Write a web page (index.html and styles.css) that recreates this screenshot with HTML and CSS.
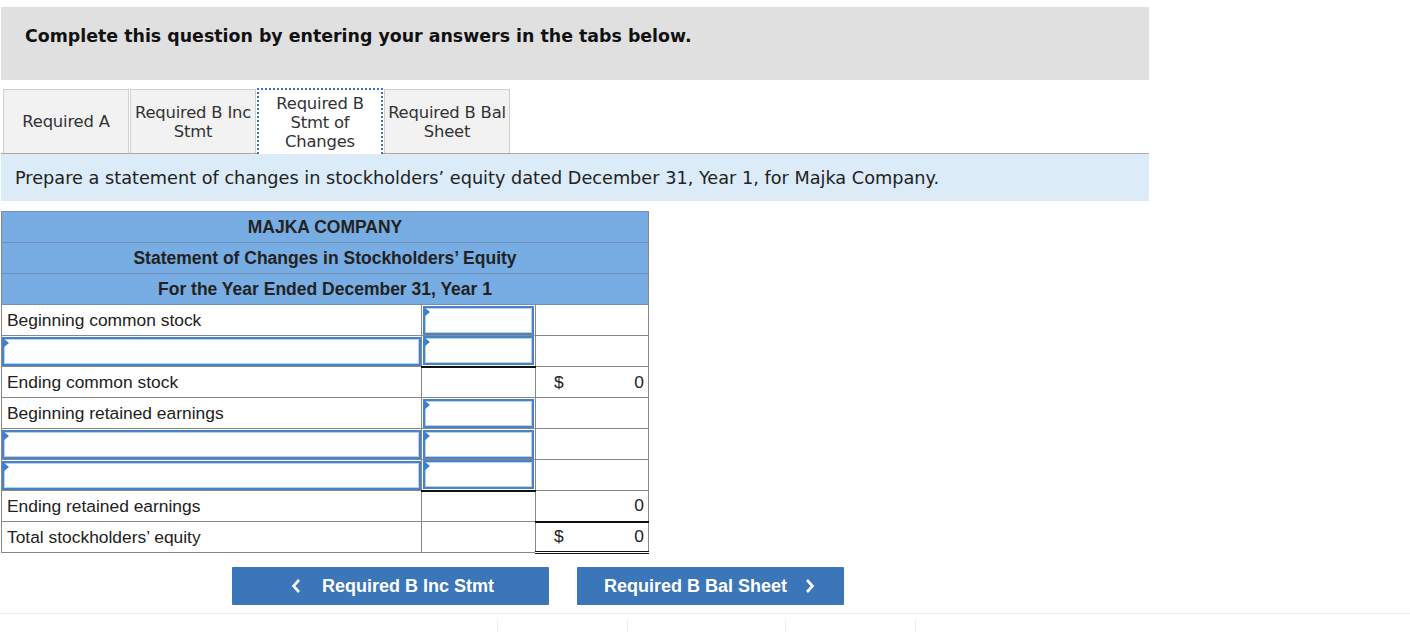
FILE: index.html
```html
<!DOCTYPE html>
<html>
<head>
<meta charset="utf-8">
<link rel="stylesheet" href="styles.css">
</head>
<body>
<div class="page">
  <div class="prompt">Complete this question by entering your answers in the tabs below.</div>
  <div class="tabs">
    <div class="tab">Required A</div>
    <div class="tab">Required B Inc<br>Stmt</div>
    <div class="tab active">Required B<br>Stmt of<br>Changes</div>
    <div class="tab">Required B Bal<br>Sheet</div>
  </div>
  <div class="instr">Prepare a statement of changes in stockholders’ equity dated December 31, Year 1, for Majka Company.</div>
  <table class="stmt">
    <colgroup><col class="w1"><col class="w2"><col class="w3"></colgroup>
    <tr class="hd"><td colspan="3">MAJKA COMPANY</td></tr>
    <tr class="hd"><td colspan="3">Statement of Changes in Stockholders’ Equity</td></tr>
    <tr class="hd"><td colspan="3">For the Year Ended December 31, Year 1</td></tr>
    <tr>
      <td class="c1">Beginning common stock</td>
      <td class="c2 in"><div class="box"><span class="tri"></span></div></td>
      <td class="c3"></td>
    </tr>
    <tr>
      <td class="c1 in"><div class="box"><span class="tri"></span></div></td>
      <td class="c2 in"><div class="box"><span class="tri"></span></div></td>
      <td class="c3"></td>
    </tr>
    <tr>
      <td class="c1">Ending common stock</td>
      <td class="c2 sumtop"></td>
      <td class="c3"><div class="amt"><span>$</span><span>0</span></div></td>
    </tr>
    <tr>
      <td class="c1">Beginning retained earnings</td>
      <td class="c2 in"><div class="box"><span class="tri"></span></div></td>
      <td class="c3"></td>
    </tr>
    <tr>
      <td class="c1 in"><div class="box"><span class="tri"></span></div></td>
      <td class="c2 in"><div class="box"><span class="tri"></span></div></td>
      <td class="c3"></td>
    </tr>
    <tr>
      <td class="c1 in"><div class="box"><span class="tri"></span></div></td>
      <td class="c2 in"><div class="box"><span class="tri"></span></div></td>
      <td class="c3"></td>
    </tr>
    <tr>
      <td class="c1">Ending retained earnings</td>
      <td class="c2 sumtop"></td>
      <td class="c3"><div class="amt"><span></span><span>0</span></div></td>
    </tr>
    <tr>
      <td class="c1">Total stockholders’ equity</td>
      <td class="c2"></td>
      <td class="c3 total"><div class="amt"><span>$</span><span>0</span></div></td>
    </tr>
  </table>
  <div class="nav">
    <div class="btn prev"><svg class="chev" width="10" height="16" viewBox="0 0 10 16"><path d="M8 2 L2.5 8 L8 14" fill="none" stroke="#fff" stroke-width="2.6"/></svg>Required B Inc Stmt</div>
    <div class="btn next">Required B Bal Sheet<svg class="chev" width="10" height="16" viewBox="0 0 10 16"><path d="M2 2 L7.5 8 L2 14" fill="none" stroke="#fff" stroke-width="2.6"/></svg></div>
  </div>
</div>
<div class="footer">
  <div class="fcols"><span></span><span></span><span></span><span></span></div>
</div>
</body>
</html>
```
FILE: styles.css
```css
html, body { margin: 0; padding: 0; background: #fff; }
body { font-family: "DejaVu Sans", Verdana, sans-serif; color: #222; }
.page { width: 1148px; padding: 7px 0 0 1px; }
.prompt {
  height: 73px; background: #e0e0e0; box-sizing: border-box;
  padding: 19px 0 0 24px; font-weight: bold; font-size: 17.4px; color: #111;
}
.tabs { display: flex; margin: 9px 0 0 2px; gap: 1px; height: 64px; position: relative; z-index: 1; }
.tab {
  width: 126px; height: 64px; box-sizing: border-box; background: #f2f2f2;
  border: 1px solid #cfcfcf; border-bottom: none;
  display: flex; align-items: center; justify-content: center; text-align: center;
  font-size: 16.4px; line-height: 19px; color: #333; white-space: nowrap; letter-spacing: -0.2px;
}
.tab.active {
  background: #fff; border: 2px dotted #3a75c4; border-bottom: none; height: 66px;
  margin-top: -1px; padding-top: 1px;
}
.instr {
  height: 48px; box-sizing: border-box; background: #dcebf8; border-top: 1px solid #a9a9a9;
  padding: 14px 0 0 14px; font-size: 17.7px; color: #222;
}
.stmt {
  margin-top: 10px; border-collapse: collapse; width: 647px; table-layout: fixed;
  font-family: "Liberation Sans", Arial, sans-serif; font-size: 17.4px;
}
col.w1 { width: 420px; }
col.w2 { width: 114px; }
col.w3 { width: 113px; }
.stmt td { border: 1px solid #888; height: 31px; padding: 0; box-sizing: border-box; white-space: nowrap; }
.stmt tr.hd td {
  background: #78ade3; text-align: center; font-weight: bold; font-size: 17.5px; color: #222;
  border-color: #6f8fb8 #888;
}
.c1 { padding-left: 5px !important; color: #222; }
.stmt td.in { padding: 0 !important; }
.box {
  position: relative; height: 29px; box-sizing: border-box;
  border: 2px solid #4a82c6; box-shadow: inset 0 0 0 1px #b7d2ee; background: #fff;
}
.c2.in .box { margin: 0 1px; }
.tri {
  position: absolute; left: -1px; top: -1px; width: 0; height: 0;
  border-top: 5px solid transparent; border-bottom: 5px solid transparent;
  border-left: 6px solid #3f7fd0;
}
.sumtop { border-top: 2px solid #111 !important; }
.amt { display: flex; justify-content: space-between; padding: 0 4px 0 18px; }
.total { border-top: 2px solid #111 !important; border-bottom: 3px double #111 !important; }
.nav { display: flex; gap: 28px; margin: 13px 0 0 231px; }
.btn {
  height: 38px; background: #3a76b8; color: #fff; font-family: "Liberation Sans", Arial, sans-serif;
  font-weight: bold; font-size: 18px; display: flex; align-items: center; justify-content: center;
  border-radius: 1px;
}
.btn.prev { width: 317px; padding-left: 4px; box-sizing: border-box; }
.btn.next { width: 267px; padding-right: 2px; box-sizing: border-box; }
.prev .chev { margin-right: 21px; }
.next .chev { margin-left: 18px; }
.footer { margin-top: 8px; border-top: 1px solid #ececec; height: 19px; }
.fcols { position: relative; height: 19px; }
.fcols span { position: absolute; top: 6px; bottom: 0; width: 1px; background: #ececec; }
.fcols span:nth-child(1) { left: 497px; }
.fcols span:nth-child(2) { left: 627px; }
.fcols span:nth-child(3) { left: 785px; }
.fcols span:nth-child(4) { left: 915px; }
```
